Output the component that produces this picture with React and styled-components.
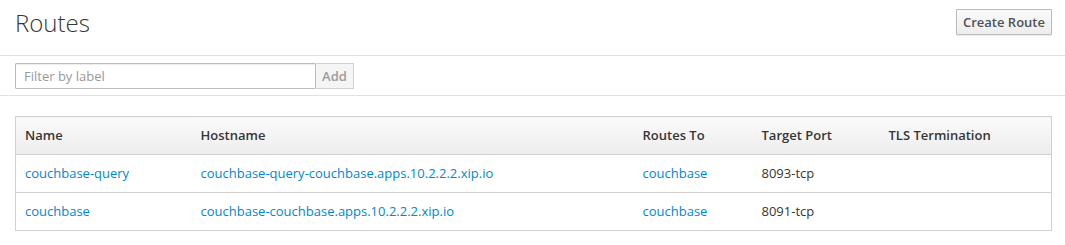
import styled, { createGlobalStyle } from 'styled-components';

const GlobalStyle = createGlobalStyle`
	html, body {
		margin: 0;
		padding: 0;
		background: #fff;
		font-family: 'Open Sans', 'Noto Sans', sans-serif;
		font-size: 13px;
		color: #363636;
	}
	* {
		box-sizing: border-box;
	}
`;

const routes = [
	{
		name: 'couchbase-query',
		hostname: 'couchbase-query-couchbase.apps.10.2.2.2.xip.io',
		service: 'couchbase',
		port: '8093-tcp',
		tls: '',
	},
	{
		name: 'couchbase',
		hostname: 'couchbase-couchbase.apps.10.2.2.2.xip.io',
		service: 'couchbase',
		port: '8091-tcp',
		tls: '',
	},
];

const columns = [
	{ key: 'name', label: 'Name', width: 176, link: true },
	{ key: 'hostname', label: 'Hostname', width: 442, link: true },
	{ key: 'service', label: 'Routes To', width: 119, link: true },
	{ key: 'port', label: 'Target Port', width: 127 },
	{ key: 'tls', label: 'TLS Termination' },
];

function App() {
	return (
		<Page>
			<GlobalStyle />
			<Header>
				<Title>Routes</Title>
				<Button>Create Route</Button>
			</Header>
			<FilterBar>
				<FilterInput placeholder="Filter by label" />
				<AddButton disabled>Add</AddButton>
			</FilterBar>
			<Content>
				<Table>
					<thead>
						<tr>
							{columns.map((col) => (
								<Th key={col.key} $width={col.width}>
									{col.label}
								</Th>
							))}
						</tr>
					</thead>
					<tbody>
						{routes.map((route) => (
							<tr key={route.name}>
								{columns.map((col) => (
									<Td key={col.key}>
										{col.link ? (
											<Link href="#">{route[col.key]}</Link>
										) : (
											route[col.key]
										)}
									</Td>
								))}
							</tr>
						))}
					</tbody>
				</Table>
			</Content>
		</Page>
	);
}

const Page = styled.div`
	width: 1065px;
	height: 245px;
	overflow: hidden;
`;

const Header = styled.div`
	display: flex;
	align-items: flex-start;
	justify-content: space-between;
	height: 56px;
	padding: 9px 13px 0 15px;
	border-bottom: 1px solid #e1e1e1;
`;

const Title = styled.h1`
	margin: 0;
	font-size: 24px;
	font-weight: 300;
	line-height: 28px;
	color: #363636;
`;

const Button = styled.button`
	height: 26px;
	padding: 0 6px;
	font-family: inherit;
	font-size: 13px;
	font-weight: 600;
	color: #4d5258;
	background: linear-gradient(#fafafa, #ededed);
	border: 1px solid #bbb;
	border-radius: 1px;
	box-shadow: 0 1px 1px rgba(3, 3, 3, 0.08);
	cursor: pointer;
`;

const FilterBar = styled.div`
	display: flex;
	height: 40px;
	padding: 7px 15px 0;
	border-bottom: 1px solid #e1e1e1;
`;

const FilterInput = styled.input`
	width: 301px;
	height: 26px;
	padding: 2px 8px;
	font-family: inherit;
	font-size: 13px;
	color: #363636;
	border: 1px solid #bbb;
	border-radius: 1px;
	box-shadow: inset 0 1px 1px rgba(3, 3, 3, 0.075);
	outline: none;
	&::placeholder {
		color: #999;
	}
`;

const AddButton = styled.button`
	width: 38px;
	height: 26px;
	padding: 0;
	font-family: inherit;
	font-size: 13px;
	font-weight: 600;
	color: #9c9c9c;
	background: #f5f5f5;
	border: 1px solid #d1d1d1;
	border-left: none;
	border-radius: 0 1px 1px 0;
`;

const Content = styled.div`
	padding: 20px 13px 0 15px;
`;

const Table = styled.table`
	width: 100%;
	border-collapse: collapse;
	border: 1px solid #d1d1d1;
`;

const Th = styled.th`
	width: ${({ $width }) => ($width ? `${$width}px` : 'auto')};
	height: 38px;
	padding: 0 10px 1px 9px;
	text-align: left;
	font-weight: 600;
	color: #363636;
	background: linear-gradient(#fafafa, #ededed);
	border-bottom: 1px solid #d1d1d1;
`;

const Td = styled.td`
	height: 38px;
	padding: 0 10px 1px 9px;
	border-top: 1px solid #d1d1d1;
	color: #363636;
`;

const Link = styled.a`
	color: #0088ce;
	text-decoration: none;
`;

export default App;
